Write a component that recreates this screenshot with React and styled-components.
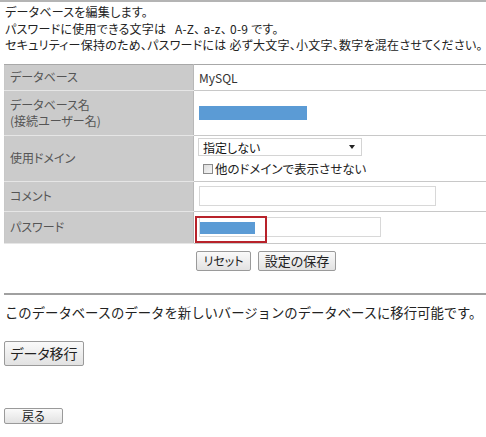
import React from 'react';
import styled, { createGlobalStyle } from 'styled-components';

const GlobalStyle = createGlobalStyle`
  html, body {
    margin: 0;
    padding: 0;
    background: #fff;
    overflow: hidden;
  }
  body {
    font-family: "Noto Sans CJK JP", "Noto Sans", sans-serif;
    font-size: 12px;
    color: #333;
  }
`;

const Page = styled.div`
  border-top: 2px solid #b4b4b4;
  padding: 2px 0 0 4px;
  width: 482px;
`;

const Notes = styled.div`
  padding-left: 1px;
  font-size: 12px;
  line-height: 16.5px;
  letter-spacing: 0.25px;
  font-feature-settings: "palt";
  color: #222;
  margin-bottom: 10px;
`;

const Table = styled.table`
  border-collapse: collapse;
  width: 482px;
  border-top: 1px solid #a8a8a8;
  border-left: 1px solid #c8c8c8;
`;

const Row = styled.tr`
  height: ${(p) => p.$h}px;
`;

const Label = styled.th`
  width: 183px;
  background: #cbcbcb;
  color: #555;
  font-weight: normal;
  text-align: left;
  padding: 0 0 0 5px;
  border-bottom: 1px solid #e6e6e6;
  border-right: 1px solid #b8b8b8;
  line-height: 16px;
  font-feature-settings: "palt";
`;

const Value = styled.td`
  padding: 0 0 0 5px;
  border-bottom: 1px solid #c8c8c8;
  vertical-align: middle;
  font-feature-settings: "palt";
`;

const Masked = styled.div`
  width: ${(p) => p.$w}px;
  height: ${(p) => p.$hh}px;
  background: #5b9bd5;
`;

const SelectWrap = styled.div`
  position: relative;
  width: 164px;
  height: 18px;
  margin-left: -1px;
  border: 1px solid #d4d4d4;
  box-sizing: border-box;
  background: #fff;
  &::after {
    content: '';
    position: absolute;
    right: 6px;
    top: 6px;
    border-left: 3px solid transparent;
    border-right: 3px solid transparent;
    border-top: 4px solid #222;
  }
`;

const Select = styled.select`
  appearance: none;
  border: none;
  background: transparent;
  width: 100%;
  height: 100%;
  padding: 0 0 0 4px;
  font: inherit;
  font-size: 12px;
  color: #111;
  font-feature-settings: "palt";
  outline: none;
`;

const CheckLine = styled.label`
  display: flex;
  align-items: center;
  gap: 2px;
  margin-top: 3px;
  padding-left: 4px;
  font-size: 12.5px;
  color: #222;
`;

const Check = styled.input`
  appearance: none;
  margin: 0;
  width: 10px;
  height: 10px;
  border: 1px solid #8a8a8a;
  background: linear-gradient(135deg, #dcdcdc, #f6f6f6);
`;

const Field = styled.div`
  position: relative;
  width: ${(p) => p.$w}px;
  height: 20px;
  box-sizing: border-box;
  border: 1px solid #d8d8d8;
  background: #fff;
  padding: 4px 0 0 0;
`;

const Highlight = styled.div`
  position: absolute;
  left: -5px;
  top: -2px;
  width: 72px;
  height: 27px;
  box-sizing: border-box;
  border: 2px solid #b8222a;
`;

const Actions = styled.div`
  display: flex;
  gap: 7px;
  padding: 7px 0 0 192px;
`;

const Button = styled.button`
  height: ${(p) => p.$h || 20}px;
  width: ${(p) => p.$w}px;
  padding: 0;
  border: 1px solid #9a9a9a;
  border-radius: 2px;
  background: linear-gradient(#fafafa, #e2e2e2);
  font-family: "Noto Sans CJK JP", "Noto Sans", sans-serif;
  font-size: ${(p) => p.$fs || 12}px;
  color: #222;
  font-feature-settings: "palt";
  line-height: 1;
`;

const Rule = styled.hr`
  margin: 22px 0 0 0;
  border: none;
  border-top: 2px solid #a0a0a0;
  width: 482px;
`;

const Migrate = styled.p`
  margin: 10px 0 0 1px;
  font-size: 13.35px;
  line-height: 16px;
  white-space: nowrap;
  color: #222;
`;

const BottomRow = styled.div`
  margin-top: ${(p) => p.$mt}px;
`;

export default function App() {
  return (
    <>
      <GlobalStyle />
      <Page>
        <Notes>
          データベースを編集します。
          <br />
          パスワードに使用できる文字は&nbsp;&nbsp;&nbsp;A-Z、&nbsp;a-z、&nbsp;0-9&nbsp;です。
          <br />
          セキュリティー保持のため、パスワードには 必ず大文字、小文字、数字を混在させてください。
        </Notes>
        <Table>
          <tbody>
            <Row $h={26}>
              <Label>データベース</Label>
              <Value>MySQL</Value>
            </Row>
            <Row $h={45}>
              <Label>
                データベース名
                <br />
                (接続ユーザー名)
              </Label>
              <Value>
                <Masked $w={108} $hh={14} />
              </Value>
            </Row>
            <Row $h={46}>
              <Label>使用ドメイン</Label>
              <Value>
                <SelectWrap>
                  <Select defaultValue="none">
                    <option value="none">指定しない</option>
                  </Select>
                </SelectWrap>
                <CheckLine>
                  <Check type="checkbox" />
                  他のドメインで表示させない
                </CheckLine>
              </Value>
            </Row>
            <Row $h={30}>
              <Label>コメント</Label>
              <Value>
                <Field $w={237} />
              </Value>
            </Row>
            <Row $h={32}>
              <Label>パスワード</Label>
              <Value>
                <Field $w={182}>
                  <Masked $w={55} $hh={12} />
                  <Highlight />
                </Field>
              </Value>
            </Row>
          </tbody>
        </Table>
        <Actions>
          <Button $w={55}>リセット</Button>
          <Button $w={78} $fs={13}>設定の保存</Button>
        </Actions>
        <Rule />
        <Migrate>このデータベースのデータを新しいバージョンのデータベースに移行可能です。</Migrate>
        <BottomRow $mt={20}>
          <Button $w={80} $h={25} $fs={14}>データ移行</Button>
        </BottomRow>
        <BottomRow $mt={41}>
          <Button $w={59} $h={16}>戻る</Button>
        </BottomRow>
      </Page>
    </>
  );
}
